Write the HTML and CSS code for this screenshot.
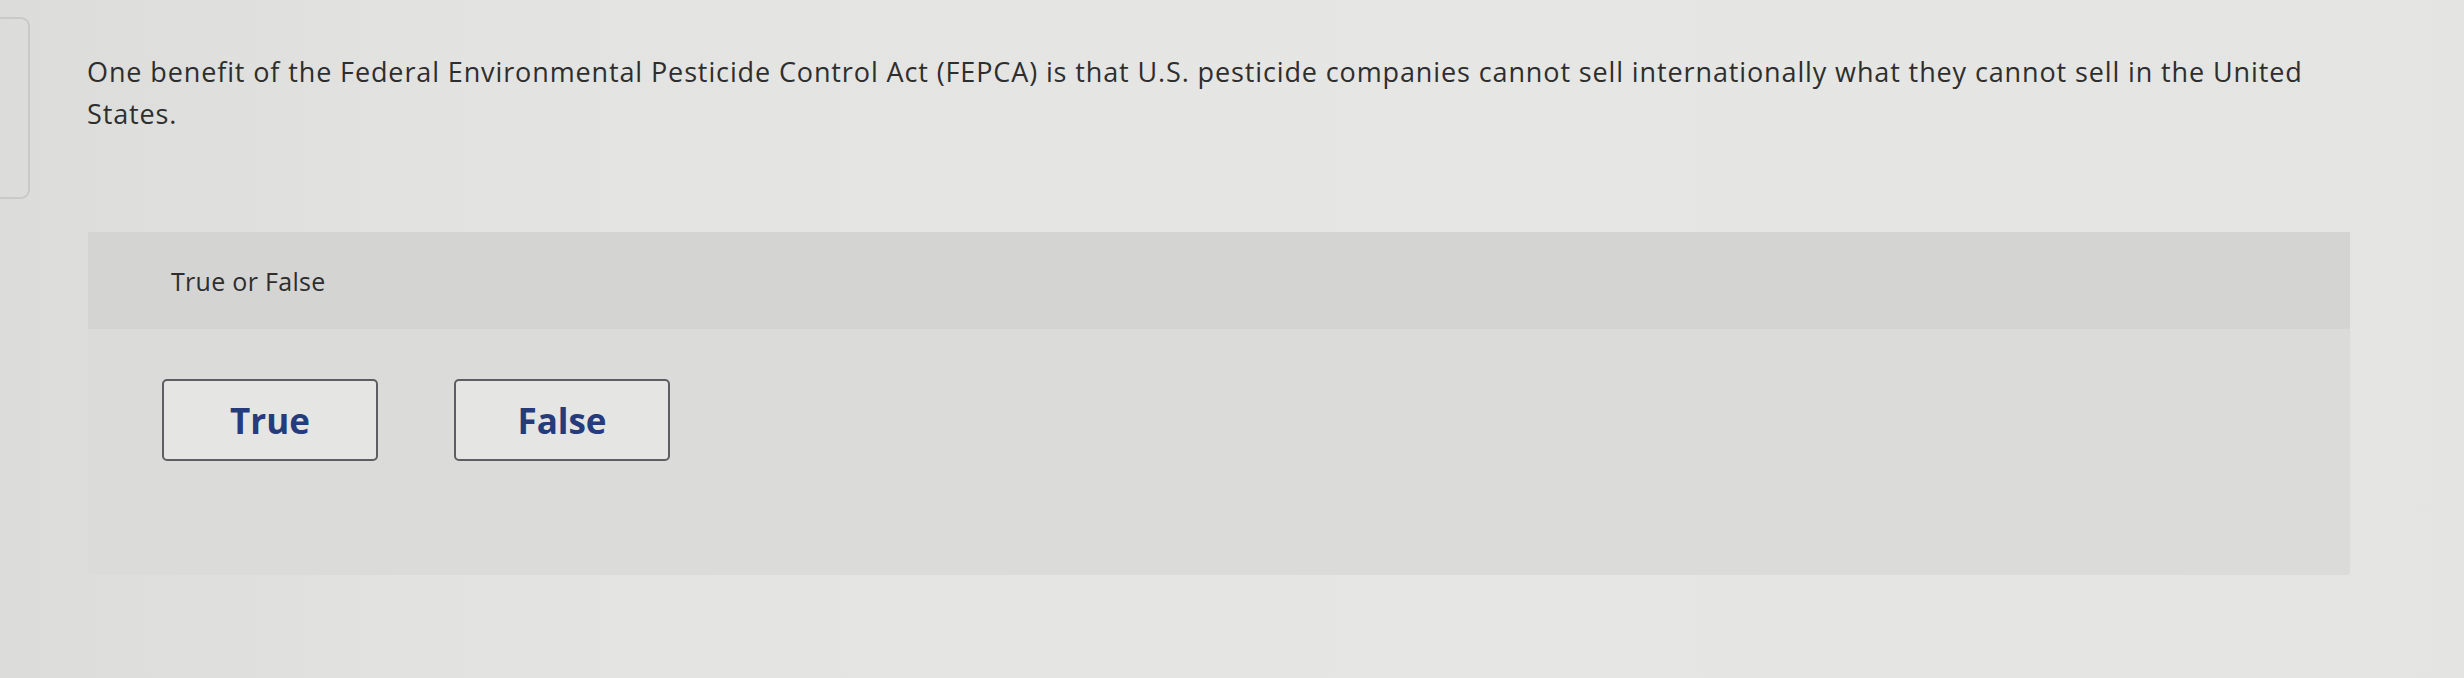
FILE: index.html
```html
<!DOCTYPE html>
<html lang="en">
<head>
<meta charset="utf-8">
<title>Question</title>
<link rel="stylesheet" href="styles.css">
</head>
<body>
<div class="page">
  <aside class="rail"></aside>
  <main class="question">
    <p class="prompt">One benefit of the Federal Environmental Pesticide Control Act (FEPCA) is that U.S. pesticide companies cannot sell internationally what they cannot sell in the United States.</p>
    <section class="answer-panel">
      <header class="answer-head">True or False</header>
      <div class="choices">
        <button class="choice" type="button">True</button>
        <button class="choice" type="button">False</button>
      </div>
    </section>
  </main>
</div>
</body>
</html>
```
FILE: styles.css
```css
html, body {
  margin: 0;
  padding: 0;
  height: 100%;
}

body {
  background: linear-gradient(90deg, #dcdcda 0%, #e3e3e1 20%, #e6e6e4 60%, #e4e4e2 100%);
  font-family: "Open Sans", Lato, Arial, sans-serif;
  color: #2e2e2e;
  overflow: hidden;
}

.page {
  display: flex;
  align-items: flex-start;
}

/* partially hidden side card at the left edge */
.rail {
  flex: 0 0 auto;
  width: 38px;
  height: 182px;
  margin-left: -8px;
  margin-top: 17px;
  border: 2px solid #c9c9c7;
  border-radius: 9px;
  box-sizing: border-box;
}

.question {
  flex: 1 1 auto;
  margin-left: 57px;
  margin-right: 114px;
}

.prompt {
  margin: 51px 0 0;
  font-size: 27px;
  line-height: 42px;
  letter-spacing: 0.88px;
  color: #2e2e2e;
}

.answer-panel {
  margin-top: 97px;
  margin-left: 1px;
  background: #dbdbda;
  border-radius: 3px;
  padding-bottom: 114px;
}

.answer-head {
  display: flex;
  align-items: center;
  height: 97px;
  padding-left: 83px;
  background: #d4d4d3;
  font-size: 25px;
  letter-spacing: 0.3px;
  color: #2e2e2e;
}

.choices {
  display: flex;
  gap: 76px;
  padding: 50px 0 0 74px;
}

.choice {
  width: 216px;
  height: 82px;
  box-sizing: border-box;
  border: 2px solid #5c5e62;
  border-radius: 5px;
  background: #e5e5e3;
  font-family: "Open Sans", Lato, Arial, sans-serif;
  font-weight: 700;
  font-size: 35px;
  color: #263b7c;
  padding: 0;
  cursor: pointer;
}
```
